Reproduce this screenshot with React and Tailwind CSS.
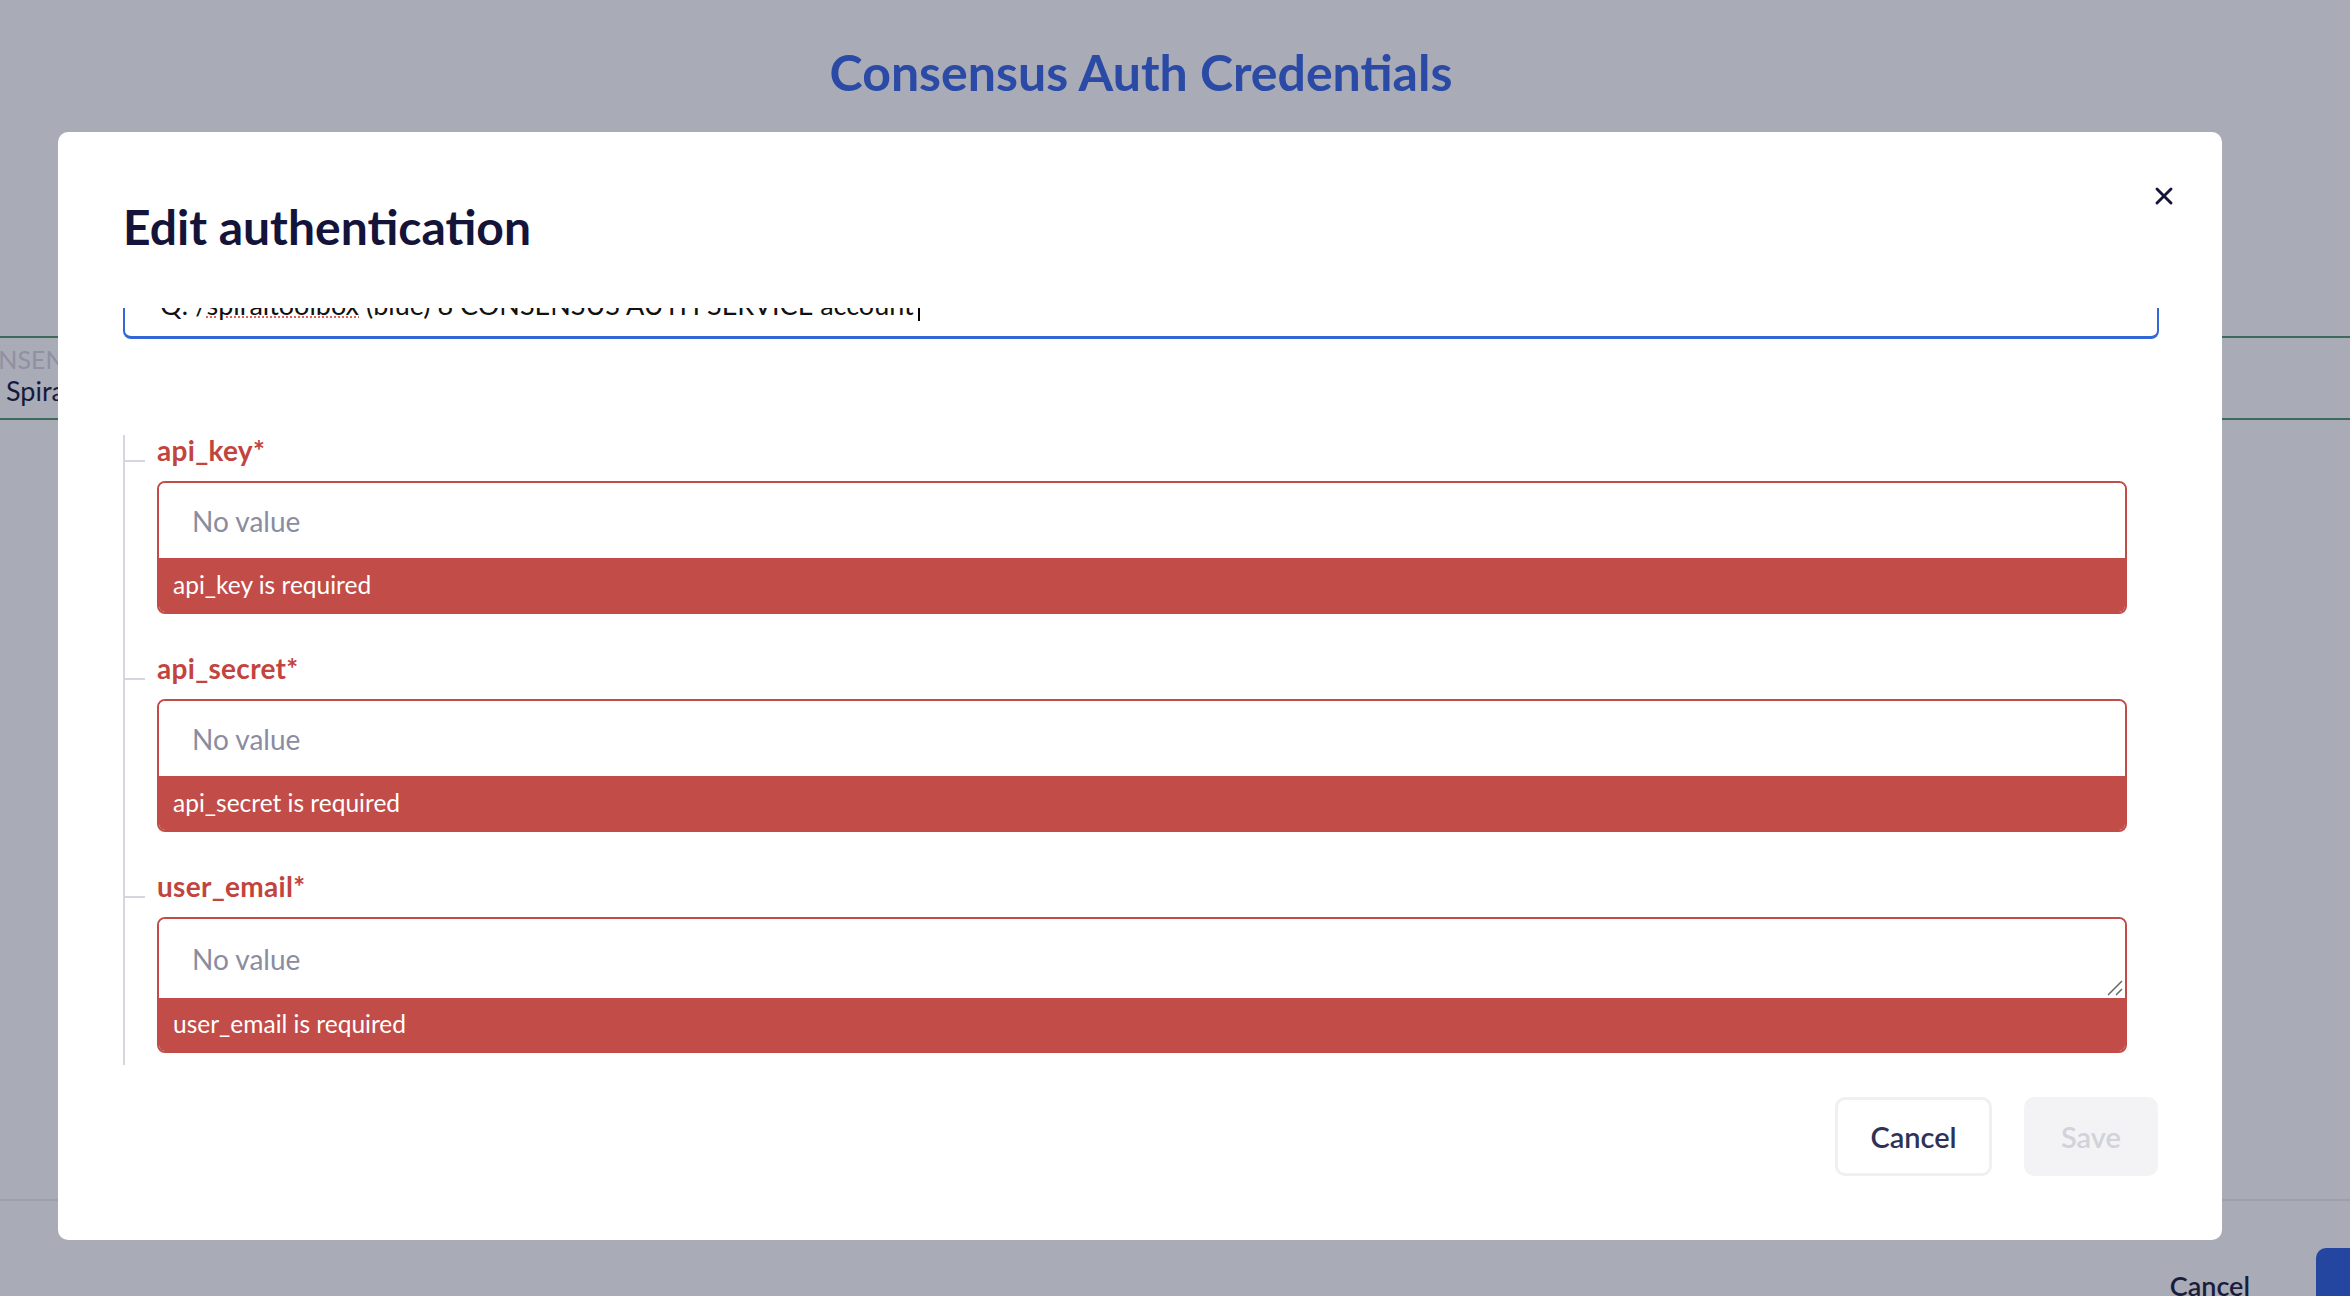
import { X } from "lucide-react";

const fields = [
  { name: "api_key", textarea: false },
  { name: "api_secret", textarea: false },
  { name: "user_email", textarea: true },
];

function Field({ name, textarea }) {
  return (
    <div className="flex flex-col">
      {/* label row with tree tick */}
      <div className="flex h-[46px] items-start">
        <div className="mt-[25px] h-[2px] w-[20px] bg-[#d6d7de]"></div>
        <label className="ml-[12px] text-[28px] leading-[30px] font-bold tracking-[0.3px] text-[#c2443f]">
          {name}*
        </label>
      </div>

      <div className="ml-[32px] overflow-hidden rounded-[8px] border-2 border-[#c24c47]">
        <div
          className={`relative flex items-center bg-white pl-[33px] text-[28px] text-[#8a8ca0] ${
            textarea ? "h-[79px]" : "h-[75px]"
          }`}
        >
          No value
          {textarea && (
            <svg
              className="absolute right-[2px] bottom-[2px]"
              width="16"
              height="16"
              viewBox="0 0 16 16"
            >
              <path d="M15 1 L1 15 M15 9 L9 15" stroke="#666" strokeWidth="1.5" />
            </svg>
          )}
        </div>
        <div
          className={`flex items-center bg-[#c24c47] pl-[14px] text-[24.5px] text-white ${
            textarea ? "h-[53px]" : "h-[54px]"
          }`}
        >
          {name} is required
        </div>
      </div>
    </div>
  );
}

export default function App() {
  return (
    <div className="relative h-[1296px] w-[2350px] overflow-hidden bg-[#a9abb7] font-[Lato,sans-serif]">
      {/* Page behind the overlay */}
      <div className="flex flex-col">
        <h1 className="pt-[42px] pr-[68px] text-center text-[50px] leading-[60px] font-bold text-[#2a4aa6]">
          Consensus Auth Credentials
        </h1>

        <div className="mt-[234px] flex h-[84px] flex-col border-y-2 border-[#3c6b5a]">
          <div className="mt-[7px] ml-[-38px] text-[25px] leading-[28px] text-[#8f91a1] uppercase whitespace-nowrap">
            Consensus Auth Service
          </div>
          <div className="mt-[1px] ml-[6px] text-[27px] leading-[34px] text-[#181a3c] whitespace-nowrap">
            Spiral
          </div>
        </div>

        <div className="mt-[779px] border-t-2 border-[#9d9fae]"></div>

        <div className="flex items-start justify-end">
          <span className="mt-[68px] text-[27px] leading-[34px] font-semibold text-[#1a1d3a]">
            Cancel
          </span>
          <div className="mt-[47px] mr-[-86px] ml-[66px] h-[80px] w-[120px] shrink-0 rounded-[10px] bg-[#2446a0]"></div>
        </div>
      </div>

      {/* Modal */}
      <div className="absolute top-[132px] left-[58px] flex h-[1108px] w-[2164px] flex-col rounded-[10px] bg-white">
        {/* Header */}
        <div className="relative h-[176px] pt-[66px] pl-[65px]">
          <h2 className="text-[48px] leading-[58px] font-bold text-[#14143a]">
            Edit authentication
          </h2>
          <button className="absolute top-[50px] right-[44px] text-[#14143a]">
            <X size={28} strokeWidth={2.5} />
          </button>
        </div>

        {/* Body */}
        <div className="flex flex-col pr-[63px] pl-[65px]">
          {/* scrolled textarea, only its bottom edge shows */}
          <div className="h-[31px] overflow-hidden rounded-b-[8px] border-x-2 border-b-[3px] border-[#3366d6] pl-[35px]">
            <div className="mt-[-23px] text-[27px] leading-[32px] whitespace-nowrap text-[#111]">
              Q: /
              <span className="underline decoration-[#e0625a] decoration-dotted decoration-2">
                spiraltoolbox
              </span>{" "}
              (blue) 8 CONSENSUS AUTH SERVICE account
              <span className="ml-[4px] inline-block h-[36px] w-[2px] bg-black align-bottom"></span>
            </div>
          </div>

          {/* Field tree */}
          <div className="mt-[96px] flex flex-col gap-[39px] border-l-2 border-[#d6d7de] pr-[32px] pb-[12px]">
            {fields.map((f) => (
              <Field key={f.name} name={f.name} textarea={f.textarea} />
            ))}
          </div>

          {/* Actions */}
          <div className="mt-[32px] flex justify-end gap-[32px] pr-[1px]">
            <button className="h-[79px] w-[157px] rounded-[10px] border-[3px] border-[#f0f0f3] bg-white text-[29px] font-semibold text-[#2e3256]">
              Cancel
            </button>
            <button className="h-[79px] w-[134px] rounded-[10px] bg-[#f3f3f5] text-[29px] font-semibold text-[#d1d2da]">
              Save
            </button>
          </div>
        </div>
      </div>
    </div>
  );
}
